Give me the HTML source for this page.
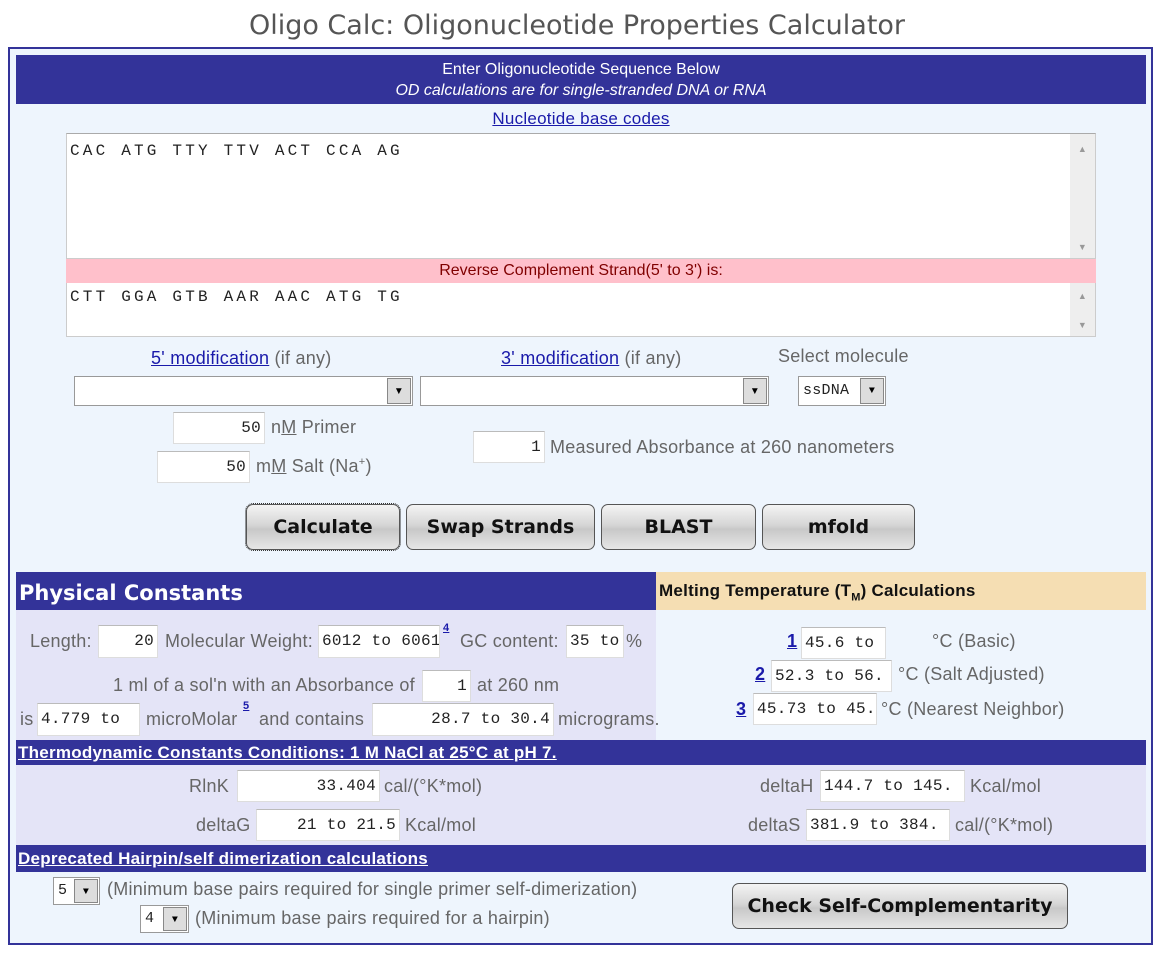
<!DOCTYPE html>
<html><head><meta charset="utf-8"><style>
*{box-sizing:border-box;margin:0;padding:0}
body{width:1154px;height:956px;background:#fff;position:relative;font-family:"Liberation Sans",Arial,sans-serif;font-size:18px;letter-spacing:0.25px;color:#666;overflow:hidden}
.a{position:absolute;white-space:nowrap}
.nv{background:#333399;color:#fff}
.in{position:absolute;background:#fff;border:1px solid #ddd;border-top-color:#bbb;font-family:"Liberation Mono",monospace;font-size:16px;letter-spacing:0.3px;color:#222;line-height:30px;padding:0 3px;overflow:hidden;white-space:nowrap}
.r{text-align:right}
.sel{position:absolute;background:#fff;border:1px solid #999}
.sel::after{content:"▼";position:absolute;right:1px;top:1px;bottom:1px;width:22px;background:#ddd;border:1px solid #888;font-size:10px;color:#000;text-align:center;line-height:26px}
.btn{position:absolute;border:1px solid #555;border-radius:7px;background:linear-gradient(#f4f4f4,#d6d6d6 45%,#c8c8c8 55%,#e6e6e6);font-family:"Comic Sans MS","DejaVu Sans",sans-serif;font-weight:bold;font-size:19px;letter-spacing:0;color:#111;text-align:center;line-height:44px}
a,.lk{color:#1a1aaa;text-decoration:underline}
sup{font-size:11px;font-weight:bold}
.ta{font-family:'Liberation Mono',monospace;font-size:16px;letter-spacing:3.2px;color:#222}
</style></head><body>
<div class="a" style="left:0;width:1154px;top:10px;text-align:center;font-family:'Comic Sans MS','DejaVu Sans',sans-serif;font-size:27px;letter-spacing:0;color:#555">Oligo Calc: Oligonucleotide Properties Calculator</div>
<div class="a" style="left:8px;top:47px;width:1145px;height:898px;border:2px solid #333399;background:#eef5fd"></div>
<div class="a nv" style="left:16px;top:55px;width:1130px;height:49px;text-align:center;font-size:16px;letter-spacing:0;line-height:21px;padding-top:4px">Enter Oligonucleotide Sequence Below<br><i>OD calculations are for single-stranded DNA or RNA</i></div>
<div class="a" style="left:0;width:1162px;top:109px;text-align:center;font-size:17px"><span class="lk">Nucleotide base codes</span></div>
<div class="a" style="left:66px;top:133px;width:1030px;height:126px;background:#fff;border:1px solid #ccc;border-top-color:#aaa"><div style="position:absolute;right:0;top:0;bottom:0;width:25px;background:#eee;font-size:9px;color:#999;text-align:center"><div style="margin-top:10px">▲</div><div style="position:absolute;bottom:6px;width:100%">▼</div></div><div class="ta" style="padding:8px 3px">CAC ATG TTY TTV ACT CCA AG</div></div>
<div class="a" style="left:66px;top:259px;width:1030px;height:24px;background:#ffc0cb;color:#800000;text-align:center;line-height:24px;font-size:16px;letter-spacing:0">Reverse Complement Strand(5' to 3') is:</div>
<div class="a" style="left:66px;top:283px;width:1030px;height:54px;background:#fff;border:1px solid #ccc;border-top:none"><div style="position:absolute;right:0;top:0;bottom:0;width:25px;background:#eee;font-size:9px;color:#999;text-align:center"><div style="margin-top:8px">▲</div><div style="position:absolute;bottom:6px;width:100%">▼</div></div><div class="ta" style="padding:5px 3px">CTT GGA GTB AAR AAC ATG TG</div></div>
<div class="a" style="left:151px;top:348px"><span class="lk">5' modification</span> (if any)</div>
<div class="a" style="left:501px;top:348px"><span class="lk">3' modification</span> (if any)</div>
<div class="a" style="left:778px;top:346px">Select molecule</div>
<div class="sel" style="left:74px;top:376px;width:339px;height:30px"></div>
<div class="sel" style="left:420px;top:376px;width:349px;height:30px"></div>
<div class="sel" style="left:798px;top:376px;width:88px;height:30px;font-family:'Liberation Mono',monospace;font-size:15px;color:#222;line-height:28px;padding-left:4px">ssDNA</div>
<div class="in r" style="left:173px;top:412px;width:92px;height:32px">50</div><div class="a" style="left:271px;top:417px">n<u>M</u> Primer</div>
<div class="in r" style="left:157px;top:451px;width:93px;height:32px">50</div><div class="a" style="left:256px;top:456px">m<u>M</u> Salt (Na<sup style="font-weight:normal">+</sup>)</div>
<div class="in r" style="left:473px;top:431px;width:72px;height:32px">1</div><div class="a" style="left:550px;top:437px">Measured Absorbance at 260 nanometers</div>
<div class="btn" style="left:246px;top:504px;width:154px;height:46px;outline:1px dotted #333">Calculate</div>
<div class="btn" style="left:406px;top:504px;width:189px;height:46px">Swap Strands</div>
<div class="btn" style="left:601px;top:504px;width:155px;height:46px">BLAST</div>
<div class="btn" style="left:762px;top:504px;width:153px;height:46px">mfold</div>
<div class="a nv" style="left:16px;top:572px;width:640px;height:38px;font-family:'Comic Sans MS','DejaVu Sans',sans-serif;font-weight:bold;font-size:21px;letter-spacing:0;line-height:42px;padding-left:3px">Physical Constants</div>
<div class="a" style="left:656px;top:572px;width:490px;height:38px;background:#f5deb3;color:#111;font-weight:bold;font-size:17px;line-height:38px;padding-left:3px">Melting Temperature (T<sub style="font-size:11px">M</sub>) Calculations</div>
<div class="a" style="left:16px;top:610px;width:640px;height:130px;background:#e4e4f7"></div>
<div class="a" style="left:30px;top:631px">Length:</div>
<div class="in r" style="left:98px;top:625px;width:60px;height:33px">20</div>
<div class="a" style="left:165px;top:631px">Molecular Weight:</div>
<div class="in" style="left:318px;top:625px;width:122px;height:33px">6012 to 6061</div>
<div class="a" style="left:443px;top:622px"><sup class="lk">4</sup></div>
<div class="a" style="left:460px;top:631px">GC content:</div>
<div class="in" style="left:566px;top:625px;width:58px;height:33px">35 to</div>
<div class="a" style="left:626px;top:631px">%</div>
<div class="a" style="left:113px;top:675px">1 ml of a sol'n with an Absorbance of</div>
<div class="in r" style="left:422px;top:670px;width:49px;height:32px">1</div>
<div class="a" style="left:477px;top:675px">at 260 nm</div>
<div class="a" style="left:20px;top:709px">is</div>
<div class="in" style="left:37px;top:703px;width:103px;height:33px">4.779 to</div>
<div class="a" style="left:146px;top:709px">microMolar</div>
<div class="a" style="left:243px;top:700px"><sup class="lk">5</sup></div>
<div class="a" style="left:259px;top:709px">and contains</div>
<div class="in r" style="left:372px;top:703px;width:182px;height:33px">28.7 to 30.4</div>
<div class="a" style="left:558px;top:709px">micrograms.</div>
<div class="a" style="left:787px;top:631px;font-weight:bold"><span class="lk">1</span></div>
<div class="in" style="left:801px;top:627px;width:85px;height:32px">45.6 to 49.</div>
<div class="a" style="left:932px;top:631px">°C (Basic)</div>
<div class="a" style="left:755px;top:664px;font-weight:bold"><span class="lk">2</span></div>
<div class="in" style="left:771px;top:660px;width:121px;height:32px">52.3 to 56.</div>
<div class="a" style="left:898px;top:664px">°C (Salt Adjusted)</div>
<div class="a" style="left:736px;top:699px;font-weight:bold"><span class="lk">3</span></div>
<div class="in" style="left:753px;top:693px;width:124px;height:32px">45.73 to 45.</div>
<div class="a" style="left:881px;top:699px">°C (Nearest Neighbor)</div>
<div class="a nv" style="left:16px;top:740px;width:1130px;height:25px;font-weight:bold;font-size:17px;line-height:25px;padding-left:2px"><u>Thermodynamic Constants Conditions: 1 M NaCl at 25°C at pH 7.</u></div>
<div class="a" style="left:16px;top:765px;width:1130px;height:80px;background:#e4e4f7"></div>
<div class="a" style="left:189px;top:776px">RlnK</div>
<div class="in r" style="left:237px;top:770px;width:143px;height:32px">33.404</div>
<div class="a" style="left:384px;top:776px">cal/(°K*mol)</div>
<div class="a" style="left:760px;top:776px">deltaH</div>
<div class="in" style="left:820px;top:770px;width:145px;height:32px">144.7 to 145.</div>
<div class="a" style="left:970px;top:776px">Kcal/mol</div>
<div class="a" style="left:196px;top:815px">deltaG</div>
<div class="in r" style="left:256px;top:809px;width:144px;height:32px">21 to 21.5</div>
<div class="a" style="left:405px;top:815px">Kcal/mol</div>
<div class="a" style="left:748px;top:815px">deltaS</div>
<div class="in" style="left:806px;top:809px;width:144px;height:32px">381.9 to 384.</div>
<div class="a" style="left:955px;top:815px">cal/(°K*mol)</div>
<div class="a nv" style="left:16px;top:845px;width:1130px;height:27px;font-weight:bold;font-size:17px;line-height:27px;padding-left:2px"><u>Deprecated Hairpin/self dimerization calculations</u></div>
<div class="sel" style="left:53px;top:877px;width:47px;height:28px;font-family:'Liberation Mono',monospace;font-size:15px;color:#222;line-height:26px;padding-left:4px">5</div>
<div class="a" style="left:107px;top:879px">(Minimum base pairs required for single primer self-dimerization)</div>
<div class="sel" style="left:140px;top:905px;width:49px;height:28px;font-family:'Liberation Mono',monospace;font-size:15px;color:#222;line-height:26px;padding-left:4px">4</div>
<div class="a" style="left:195px;top:908px">(Minimum base pairs required for a hairpin)</div>
<div class="btn" style="left:732px;top:883px;width:336px;height:46px">Check Self-Complementarity</div>
</body></html>
